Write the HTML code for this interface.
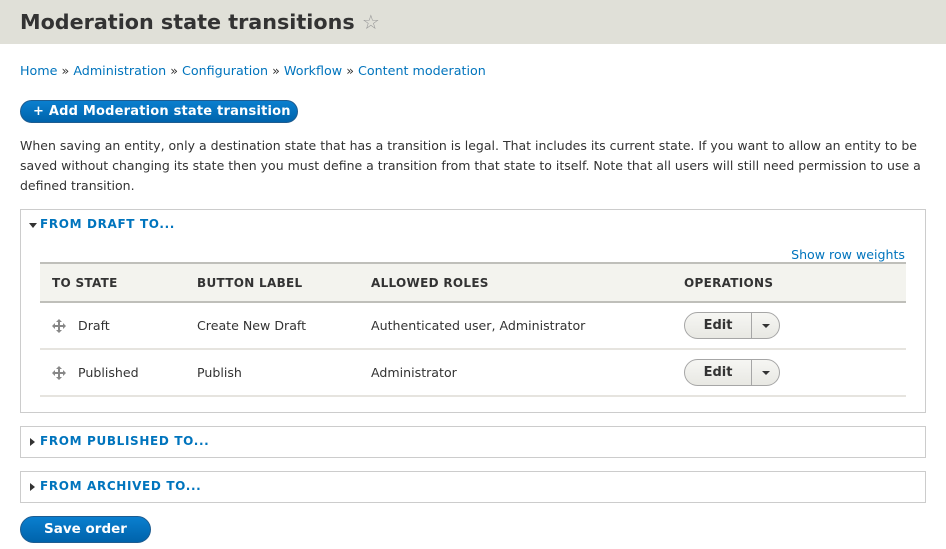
<!DOCTYPE html>
<html><head><style>
*{box-sizing:border-box;margin:0;padding:0}
body{width:946px;height:549px;overflow:hidden;background:#fff;font-family:"DejaVu Sans","Liberation Sans",sans-serif;font-size:12.6px;color:#333}
a{color:#0074bd;text-decoration:none}
.hdr{height:44px;background:#e0e0d8;position:relative}
.hdr h1{position:absolute;left:20px;top:10px;font-size:20.7px;font-weight:bold;color:#333}
.hdr h1 span{font-weight:normal;color:#999;font-size:20px}
.bc{position:absolute;left:20px;top:63px;font-size:12.7px;color:#333}
.add{position:absolute;left:20px;top:100px;width:278px;height:23px;border-radius:12px;background:linear-gradient(#0a7fcf,#0063ab);border:1px solid #1e5c90;color:#fff;font-weight:bold;font-size:13px;line-height:21px;padding-left:12px;letter-spacing:.2px}
.desc{position:absolute;left:20px;top:136px;width:906px;line-height:20px;font-size:12.5px;color:#333}
.fs{position:absolute;left:20px;width:906px;border:1px solid #ccc}
.sum{position:absolute;left:19px;color:#0074bd;font-weight:bold;font-size:12px;letter-spacing:.65px}
.tri{position:absolute;left:8px;width:0;height:0}
.down{border-left:4px solid transparent;border-right:4px solid transparent;border-top:5px solid #333}
.right{border-top:4px solid transparent;border-bottom:4px solid transparent;border-left:5px solid #333}
table{position:absolute;left:19px;top:52px;width:866px;border-collapse:collapse}
th{background:#f3f3ee;border-top:2px solid #bfbfba;border-bottom:2px solid #bfbfba;height:39px;text-align:left;font-size:12px;letter-spacing:.3px;color:#333;padding-left:12px}
td{height:47px;border-bottom:2px solid #e6e4df;padding-left:12px;font-size:12.6px}
.drag{display:inline-block;width:14px;margin-right:12px;vertical-align:middle}
.op{display:inline-block;width:96px;height:27px;border:1px solid #a6a6a6;border-radius:14px;background:linear-gradient(#f6f6f3,#e8e8e3);position:relative;vertical-align:middle}
.op b{position:absolute;left:0;width:66px;text-align:center;line-height:25px;font-size:13px}
.op i{position:absolute;left:66px;top:0;bottom:0;border-left:1px solid #a6a6a6}
.op s{position:absolute;left:77px;top:11px;border-left:4px solid transparent;border-right:4px solid transparent;border-top:4px solid #333}
.save{position:absolute;left:20px;top:516px;width:131px;height:27px;border-radius:14px;background:linear-gradient(#0a7fcf,#0063ab);border:1px solid #1e5c90;color:#fff;font-weight:bold;font-size:13.5px;line-height:25px;text-align:center}
</style></head><body>
<div class="hdr"><h1>Moderation state transitions <span>☆</span></h1></div>
<div class="bc"><a>Home</a> » <a>Administration</a> » <a>Configuration</a> » <a>Workflow</a> » <a>Content moderation</a></div>
<div class="add">+ Add Moderation state transition</div>
<div class="desc">When saving an entity, only a destination state that has a transition is legal. That includes its current state. If you want to allow an entity to be saved without changing its state then you must define a transition from that state to itself. Note that all users will still need permission to use a defined transition.</div>
<div class="fs" style="top:209px;height:204px">
<div class="tri down" style="top:13px"></div>
<div class="sum" style="top:7px">FROM DRAFT TO...</div>
<a style="position:absolute;right:20px;top:37px">Show row weights</a>
<table>
<tr><th style="width:145px">TO STATE</th><th style="width:174px">BUTTON LABEL</th><th style="width:313px">ALLOWED ROLES</th><th>OPERATIONS</th></tr>
<tr><td><svg class="drag" width="14" height="14" viewBox="0 0 14 14" fill="#888"><rect x="6" y="2" width="2" height="10"/><rect x="2" y="6" width="10" height="2"/><path d="M7 0L4 3h6zM7 14L4 11h6zM0 7L3 4v6zM14 7L11 4v6z"/></svg>Draft</td><td>Create New Draft</td><td>Authenticated user, Administrator</td><td><span class="op"><b>Edit</b><i></i><s></s></span></td></tr>
<tr><td><svg class="drag" width="14" height="14" viewBox="0 0 14 14" fill="#888"><rect x="6" y="2" width="2" height="10"/><rect x="2" y="6" width="10" height="2"/><path d="M7 0L4 3h6zM7 14L4 11h6zM0 7L3 4v6zM14 7L11 4v6z"/></svg>Published</td><td>Publish</td><td>Administrator</td><td><span class="op"><b>Edit</b><i></i><s></s></span></td></tr>
</table>
</div>
<div class="fs" style="top:426px;height:32px"><div class="tri right" style="top:11px;left:9px"></div><div class="sum" style="top:7px">FROM PUBLISHED TO...</div></div>
<div class="fs" style="top:471px;height:32px"><div class="tri right" style="top:11px;left:9px"></div><div class="sum" style="top:7px">FROM ARCHIVED TO...</div></div>
<div class="save">Save order</div>
</body></html>
